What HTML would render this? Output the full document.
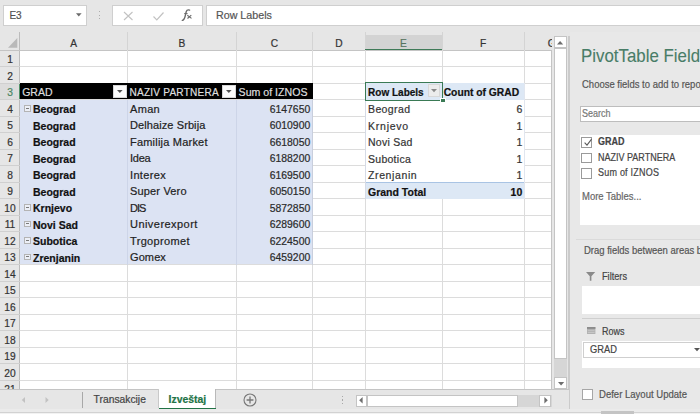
<!DOCTYPE html>
<html><head><meta charset="utf-8"><style>
html,body{margin:0;padding:0;width:700px;height:414px;overflow:hidden;background:#e6e6e6}
body{position:relative;font-family:"Liberation Sans", sans-serif}
#w{position:absolute;left:0;top:0;width:700px;height:414px;overflow:hidden}
#w>div{position:absolute}
.t{white-space:nowrap;-webkit-text-stroke-width:0.2px}
.r{text-align:right}
.c{text-align:center}
</style></head><body><div id="w">
<div style="left:0px;top:0px;width:700px;height:32px;background:#e6e6e6"></div>
<div style="left:3px;top:4.6px;width:84.4px;height:21.1px;background:#fff;border:1px solid #cfcfcf;box-sizing:border-box"></div>
<div class="t" style="left:9.4px;top:10.9px;font-size:10px;line-height:10px;color:#505050;">E3</div>
<svg style="position:absolute;left:76px;top:12.8px" width="6" height="4"><path d="M0 0.3 L5.6 0.3 L2.8 3.4Z" fill="#6a6a6a"/></svg>
<div style="left:99.1px;top:10.9px;width:1.4px;height:1.4px;background:#9a9a9a;border-radius:1px"></div>
<div style="left:99.1px;top:14.5px;width:1.4px;height:1.4px;background:#9a9a9a;border-radius:1px"></div>
<div style="left:99.1px;top:18px;width:1.4px;height:1.4px;background:#9a9a9a;border-radius:1px"></div>
<div style="left:112.3px;top:4.6px;width:91px;height:21.1px;background:#fff;border:1px solid #cfcfcf;box-sizing:border-box"></div>
<svg style="position:absolute;left:123px;top:11px" width="11" height="10"><path d="M1 1 L9.5 9 M9.5 1 L1 9" stroke="#c2c2c2" stroke-width="1.1" fill="none"/></svg>
<svg style="position:absolute;left:152px;top:10.5px" width="13" height="10"><path d="M1.5 5.5 L4.8 8.8 L11.5 1.5" stroke="#c2c2c2" stroke-width="1.2" fill="none"/></svg>
<svg style="position:absolute;left:180px;top:8px" width="14" height="14"><path d="M2.3 12.4 C3.8 12.2 4.6 10.5 5.2 8 L6.2 3.8 C6.7 2.2 7.8 1.6 9.6 2.1" stroke="#6a6a6a" stroke-width="1.35" fill="none" stroke-linecap="round"/><path d="M4.2 5.6 H7.6" stroke="#6a6a6a" stroke-width="1"/><path d="M7.3 7.2 L11.5 10.4 M11.3 7.1 L7.5 10.5" stroke="#6a6a6a" stroke-width="1.1"/></svg>
<div style="left:205.7px;top:4.6px;width:494.3px;height:21.1px;background:#fff;border:1px solid #cfcfcf;border-right:none;box-sizing:border-box"></div>
<div class="t" style="left:216px;top:10.3px;font-size:10.7px;line-height:10.7px;color:#555;">Row Labels</div>
<div style="left:0px;top:32px;width:551.4px;height:18.3px;background:#e6e6e6"></div>
<div style="left:365px;top:35px;width:77px;height:15px;background:#d3d3d3"></div>
<div class="t c" style="left:-26.35px;width:200px;top:39.03px;font-size:10.2px;line-height:10.2px;color:#333;">A</div>
<div style="left:127px;top:32px;width:1px;height:18px;background:#d4d4d4"></div>
<div class="t c" style="left:81.95px;width:200px;top:39.03px;font-size:10.2px;line-height:10.2px;color:#333;">B</div>
<div style="left:235.9px;top:32px;width:1px;height:18px;background:#d4d4d4"></div>
<div class="t c" style="left:174.55px;width:200px;top:39.03px;font-size:10.2px;line-height:10.2px;color:#333;">C</div>
<div style="left:312.2px;top:32px;width:1px;height:18px;background:#d4d4d4"></div>
<div class="t c" style="left:238.85px;width:200px;top:39.03px;font-size:10.2px;line-height:10.2px;color:#333;">D</div>
<div style="left:364.5px;top:32px;width:1px;height:18px;background:#d4d4d4"></div>
<div class="t c" style="left:303.5px;width:200px;top:39.03px;font-size:10.2px;line-height:10.2px;color:#56735f;">E</div>
<div style="left:441.5px;top:32px;width:1px;height:18px;background:#d4d4d4"></div>
<div class="t c" style="left:383.15px;width:200px;top:39.03px;font-size:10.2px;line-height:10.2px;color:#333;">F</div>
<div style="left:523.8px;top:32px;width:1px;height:18px;background:#d4d4d4"></div>
<div class="t c" style="left:451.7px;width:200px;top:39.03px;font-size:10.2px;line-height:10.2px;color:#333;">G</div>
<div style="left:0px;top:49.6px;width:551.4px;height:1px;background:#bcbcbc"></div>
<svg style="position:absolute;left:8px;top:37.8px" width="10" height="10"><path d="M9.3 0 L9.3 9.8 L0 9.8Z" fill="#b9b9b9"/></svg>
<div style="left:19.8px;top:50.3px;width:531.6px;height:339px;background:#fff"></div>
<div style="left:0px;top:50.3px;width:19.8px;height:339px;background:#e6e6e6"></div>
<div style="left:0px;top:83.3px;width:19.8px;height:16.5px;background:#dcdcdc"></div>
<div style="left:19.3px;top:32px;width:1px;height:357.3px;background:#bcbcbc"></div>
<div style="left:0px;top:49.7px;width:551.4px;height:1px;background:#c4c4c4"></div>
<div style="left:365px;top:48.7px;width:77px;height:1.8px;background:#3f7a58"></div>
<div style="left:18.6px;top:83.3px;width:1.3px;height:16.5px;background:#4f8f66"></div>
<div class="t c" style="left:-90px;width:200px;top:55.02px;font-size:10.2px;line-height:10.2px;color:#333;">1</div>
<div style="left:0px;top:66.3px;width:19.8px;height:1px;background:#d0d0d0"></div>
<div class="t c" style="left:-90px;width:200px;top:71.53px;font-size:10.2px;line-height:10.2px;color:#333;">2</div>
<div style="left:0px;top:82.8px;width:19.8px;height:1px;background:#d0d0d0"></div>
<div class="t c" style="left:-90px;width:200px;top:88.03px;font-size:10.2px;line-height:10.2px;color:#4a8562;">3</div>
<div style="left:0px;top:99.3px;width:19.8px;height:1px;background:#d0d0d0"></div>
<div class="t c" style="left:-90px;width:200px;top:104.54px;font-size:10.2px;line-height:10.2px;color:#333;">4</div>
<div style="left:0px;top:115.81px;width:19.8px;height:1px;background:#d0d0d0"></div>
<div class="t c" style="left:-90px;width:200px;top:121.04px;font-size:10.2px;line-height:10.2px;color:#333;">5</div>
<div style="left:0px;top:132.31px;width:19.8px;height:1px;background:#d0d0d0"></div>
<div class="t c" style="left:-90px;width:200px;top:137.55px;font-size:10.2px;line-height:10.2px;color:#333;">6</div>
<div style="left:0px;top:148.82px;width:19.8px;height:1px;background:#d0d0d0"></div>
<div class="t c" style="left:-90px;width:200px;top:154.05px;font-size:10.2px;line-height:10.2px;color:#333;">7</div>
<div style="left:0px;top:165.32px;width:19.8px;height:1px;background:#d0d0d0"></div>
<div class="t c" style="left:-90px;width:200px;top:170.56px;font-size:10.2px;line-height:10.2px;color:#333;">8</div>
<div style="left:0px;top:181.83px;width:19.8px;height:1px;background:#d0d0d0"></div>
<div class="t c" style="left:-90px;width:200px;top:187.06px;font-size:10.2px;line-height:10.2px;color:#333;">9</div>
<div style="left:0px;top:198.33px;width:19.8px;height:1px;background:#d0d0d0"></div>
<div class="t c" style="left:-90px;width:200px;top:203.56px;font-size:10.2px;line-height:10.2px;color:#333;">10</div>
<div style="left:0px;top:214.84px;width:19.8px;height:1px;background:#d0d0d0"></div>
<div class="t c" style="left:-90px;width:200px;top:220.07px;font-size:10.2px;line-height:10.2px;color:#333;">11</div>
<div style="left:0px;top:231.34px;width:19.8px;height:1px;background:#d0d0d0"></div>
<div class="t c" style="left:-90px;width:200px;top:236.57px;font-size:10.2px;line-height:10.2px;color:#333;">12</div>
<div style="left:0px;top:247.85px;width:19.8px;height:1px;background:#d0d0d0"></div>
<div class="t c" style="left:-90px;width:200px;top:253.08px;font-size:10.2px;line-height:10.2px;color:#333;">13</div>
<div style="left:0px;top:264.36px;width:19.8px;height:1px;background:#d0d0d0"></div>
<div class="t c" style="left:-90px;width:200px;top:269.58px;font-size:10.2px;line-height:10.2px;color:#333;">14</div>
<div style="left:0px;top:280.86px;width:19.8px;height:1px;background:#d0d0d0"></div>
<div class="t c" style="left:-90px;width:200px;top:286.09px;font-size:10.2px;line-height:10.2px;color:#333;">15</div>
<div style="left:0px;top:297.37px;width:19.8px;height:1px;background:#d0d0d0"></div>
<div class="t c" style="left:-90px;width:200px;top:302.59px;font-size:10.2px;line-height:10.2px;color:#333;">16</div>
<div style="left:0px;top:313.87px;width:19.8px;height:1px;background:#d0d0d0"></div>
<div class="t c" style="left:-90px;width:200px;top:319.1px;font-size:10.2px;line-height:10.2px;color:#333;">17</div>
<div style="left:0px;top:330.38px;width:19.8px;height:1px;background:#d0d0d0"></div>
<div class="t c" style="left:-90px;width:200px;top:335.6px;font-size:10.2px;line-height:10.2px;color:#333;">18</div>
<div style="left:0px;top:346.88px;width:19.8px;height:1px;background:#d0d0d0"></div>
<div class="t c" style="left:-90px;width:200px;top:352.11px;font-size:10.2px;line-height:10.2px;color:#333;">19</div>
<div style="left:0px;top:363.38px;width:19.8px;height:1px;background:#d0d0d0"></div>
<div class="t c" style="left:-90px;width:200px;top:368.61px;font-size:10.2px;line-height:10.2px;color:#333;">20</div>
<div style="left:0px;top:379.89px;width:19.8px;height:1px;background:#d0d0d0"></div>
<div class="t c" style="left:-90px;width:200px;top:385.12px;font-size:10.2px;line-height:10.2px;color:#333;">21</div>
<div style="left:0px;top:396.39px;width:19.8px;height:1px;background:#d0d0d0"></div>
<div style="left:19.8px;top:99.81px;width:292.9px;height:165.05px;background:#dce3f3"></div>
<div style="left:19.8px;top:66.3px;width:531.6px;height:1px;background:#dcdcdc"></div>
<div style="left:19.8px;top:82.8px;width:531.6px;height:1px;background:#dcdcdc"></div>
<div style="left:19.8px;top:99.3px;width:531.6px;height:1px;background:#dcdcdc"></div>
<div style="left:19.8px;top:115.81px;width:531.6px;height:1px;background:#dcdcdc"></div>
<div style="left:19.8px;top:132.31px;width:531.6px;height:1px;background:#dcdcdc"></div>
<div style="left:19.8px;top:148.82px;width:531.6px;height:1px;background:#dcdcdc"></div>
<div style="left:19.8px;top:165.32px;width:531.6px;height:1px;background:#dcdcdc"></div>
<div style="left:19.8px;top:181.83px;width:531.6px;height:1px;background:#dcdcdc"></div>
<div style="left:19.8px;top:198.33px;width:531.6px;height:1px;background:#dcdcdc"></div>
<div style="left:19.8px;top:214.84px;width:531.6px;height:1px;background:#dcdcdc"></div>
<div style="left:19.8px;top:231.34px;width:531.6px;height:1px;background:#dcdcdc"></div>
<div style="left:19.8px;top:247.85px;width:531.6px;height:1px;background:#dcdcdc"></div>
<div style="left:19.8px;top:264.36px;width:531.6px;height:1px;background:#dcdcdc"></div>
<div style="left:19.8px;top:280.86px;width:531.6px;height:1px;background:#dcdcdc"></div>
<div style="left:19.8px;top:297.37px;width:531.6px;height:1px;background:#dcdcdc"></div>
<div style="left:19.8px;top:313.87px;width:531.6px;height:1px;background:#dcdcdc"></div>
<div style="left:19.8px;top:330.38px;width:531.6px;height:1px;background:#dcdcdc"></div>
<div style="left:19.8px;top:346.88px;width:531.6px;height:1px;background:#dcdcdc"></div>
<div style="left:19.8px;top:363.38px;width:531.6px;height:1px;background:#dcdcdc"></div>
<div style="left:19.8px;top:379.89px;width:531.6px;height:1px;background:#dcdcdc"></div>
<div style="left:19.8px;top:396.39px;width:531.6px;height:1px;background:#dcdcdc"></div>
<div style="left:127px;top:50.3px;width:1px;height:339px;background:#dcdcdc"></div>
<div style="left:235.9px;top:50.3px;width:1px;height:339px;background:#dcdcdc"></div>
<div style="left:312.2px;top:50.3px;width:1px;height:339px;background:#dcdcdc"></div>
<div style="left:364.5px;top:50.3px;width:1px;height:339px;background:#dcdcdc"></div>
<div style="left:441.5px;top:50.3px;width:1px;height:339px;background:#dcdcdc"></div>
<div style="left:523.8px;top:50.3px;width:1px;height:339px;background:#dcdcdc"></div>
<div style="left:19.8px;top:99.81px;width:292.9px;height:164.55px;background:#dce3f3"></div>
<div style="left:127px;top:99.81px;width:1px;height:165.05px;background:#cdd5e8"></div>
<div style="left:235.9px;top:99.81px;width:1px;height:165.05px;background:#cdd5e8"></div>
<div style="left:312.2px;top:83.3px;width:1px;height:181.55px;background:#c9cfdd"></div>
<div style="left:19.8px;top:83.3px;width:292.9px;height:15.9px;background:#000"></div>
<div class="t" style="left:22.2px;top:87.38px;font-size:10.5px;line-height:10.5px;color:#dedede;">GRAD</div>
<div class="t" style="left:129.5px;top:87.72px;font-size:10.1px;line-height:10.1px;color:#dedede;letter-spacing:0.2px">NAZIV PARTNERA</div>
<div class="t" style="left:238.6px;top:87.29px;font-size:10.6px;line-height:10.6px;color:#dedede;">Sum of IZNOS</div>
<div style="left:113.2px;top:84.9px;width:13.8px;height:13.2px;background:#fbfbfb;border:1px solid #d6d6d6;box-sizing:border-box"></div>
<svg style="position:absolute;left:117.2px;top:90.2px" width="7" height="5"><path d="M0 0 L5.6 0 L2.8 3Z" fill="#505050"/></svg>
<div style="left:222.1px;top:84.9px;width:13.8px;height:13.2px;background:#fbfbfb;border:1px solid #d6d6d6;box-sizing:border-box"></div>
<svg style="position:absolute;left:226.1px;top:90.2px" width="7" height="5"><path d="M0 0 L5.6 0 L2.8 3Z" fill="#505050"/></svg>
<div class="t" style="left:33px;top:104.18px;font-size:10.5px;line-height:10.5px;color:#111;font-weight:bold;">Beograd</div>
<div class="t" style="left:130px;top:103.76px;font-size:11px;line-height:11px;color:#222;letter-spacing:0.333px">Aman</div>
<div class="t r" style="left:110.2px;width:200px;top:104.56px;font-size:10.4px;line-height:10.4px;color:#2a2a2a;">6147650</div>
<div style="left:24.2px;top:105.01px;width:6.6px;height:6.6px;border:1px solid #b4b4b4;box-sizing:border-box;background:#eceff7"></div>
<div style="left:25.7px;top:107.91px;width:3.6px;height:0.9px;background:#7a7a7a"></div>
<div class="t" style="left:33px;top:120.69px;font-size:10.5px;line-height:10.5px;color:#111;font-weight:bold;">Beograd</div>
<div class="t" style="left:130px;top:120.26px;font-size:11px;line-height:11px;color:#222;letter-spacing:0.093px">Delhaize Srbija</div>
<div class="t r" style="left:110.2px;width:200px;top:121.07px;font-size:10.4px;line-height:10.4px;color:#2a2a2a;">6010900</div>
<div class="t" style="left:33px;top:137.19px;font-size:10.5px;line-height:10.5px;color:#111;font-weight:bold;">Beograd</div>
<div class="t" style="left:130px;top:136.77px;font-size:11px;line-height:11px;color:#222;letter-spacing:0.207px">Familija Market</div>
<div class="t r" style="left:110.2px;width:200px;top:137.58px;font-size:10.4px;line-height:10.4px;color:#2a2a2a;">6618050</div>
<div class="t" style="left:33px;top:153.69px;font-size:10.5px;line-height:10.5px;color:#111;font-weight:bold;">Beograd</div>
<div class="t" style="left:130px;top:153.27px;font-size:11px;line-height:11px;color:#222;letter-spacing:-0.233px">Idea</div>
<div class="t r" style="left:110.2px;width:200px;top:154.08px;font-size:10.4px;line-height:10.4px;color:#2a2a2a;">6188200</div>
<div class="t" style="left:33px;top:170.2px;font-size:10.5px;line-height:10.5px;color:#111;font-weight:bold;">Beograd</div>
<div class="t" style="left:130px;top:169.78px;font-size:11px;line-height:11px;color:#222;letter-spacing:0.333px">Interex</div>
<div class="t r" style="left:110.2px;width:200px;top:170.59px;font-size:10.4px;line-height:10.4px;color:#2a2a2a;">6169500</div>
<div class="t" style="left:33px;top:186.7px;font-size:10.5px;line-height:10.5px;color:#111;font-weight:bold;">Beograd</div>
<div class="t" style="left:130px;top:186.28px;font-size:11px;line-height:11px;color:#222;letter-spacing:0.167px">Super Vero</div>
<div class="t r" style="left:110.2px;width:200px;top:187.09px;font-size:10.4px;line-height:10.4px;color:#2a2a2a;">6050150</div>
<div class="t" style="left:33px;top:203.21px;font-size:10.5px;line-height:10.5px;color:#111;font-weight:bold;">Krnjevo</div>
<div class="t" style="left:130px;top:202.78px;font-size:11px;line-height:11px;color:#222;letter-spacing:-1.0px">DIS</div>
<div class="t r" style="left:110.2px;width:200px;top:203.59px;font-size:10.4px;line-height:10.4px;color:#2a2a2a;">5872850</div>
<div style="left:24.2px;top:204.03px;width:6.6px;height:6.6px;border:1px solid #b4b4b4;box-sizing:border-box;background:#eceff7"></div>
<div style="left:25.7px;top:206.93px;width:3.6px;height:0.9px;background:#7a7a7a"></div>
<div class="t" style="left:33px;top:219.71px;font-size:10.5px;line-height:10.5px;color:#111;font-weight:bold;">Novi Sad</div>
<div class="t" style="left:130px;top:219.29px;font-size:11px;line-height:11px;color:#222;letter-spacing:0.455px">Univerexport</div>
<div class="t r" style="left:110.2px;width:200px;top:220.1px;font-size:10.4px;line-height:10.4px;color:#2a2a2a;">6289600</div>
<div style="left:24.2px;top:220.54px;width:6.6px;height:6.6px;border:1px solid #b4b4b4;box-sizing:border-box;background:#eceff7"></div>
<div style="left:25.7px;top:223.44px;width:3.6px;height:0.9px;background:#7a7a7a"></div>
<div class="t" style="left:33px;top:236.22px;font-size:10.5px;line-height:10.5px;color:#111;font-weight:bold;">Subotica</div>
<div class="t" style="left:130px;top:235.79px;font-size:11px;line-height:11px;color:#222;letter-spacing:0.333px">Trgopromet</div>
<div class="t r" style="left:110.2px;width:200px;top:236.6px;font-size:10.4px;line-height:10.4px;color:#2a2a2a;">6224500</div>
<div style="left:24.2px;top:237.04px;width:6.6px;height:6.6px;border:1px solid #b4b4b4;box-sizing:border-box;background:#eceff7"></div>
<div style="left:25.7px;top:239.94px;width:3.6px;height:0.9px;background:#7a7a7a"></div>
<div class="t" style="left:33px;top:252.72px;font-size:10.5px;line-height:10.5px;color:#111;font-weight:bold;">Zrenjanin</div>
<div class="t" style="left:130px;top:252.3px;font-size:11px;line-height:11px;color:#222;letter-spacing:0.1px">Gomex</div>
<div class="t r" style="left:110.2px;width:200px;top:253.11px;font-size:10.4px;line-height:10.4px;color:#2a2a2a;">6459200</div>
<div style="left:24.2px;top:253.55px;width:6.6px;height:6.6px;border:1px solid #b4b4b4;box-sizing:border-box;background:#eceff7"></div>
<div style="left:25.7px;top:256.45px;width:3.6px;height:0.9px;background:#7a7a7a"></div>
<div style="left:365px;top:83.3px;width:159.3px;height:16.5px;background:#dde8f5"></div>
<div style="left:365px;top:99.81px;width:159.3px;height:82.52px;background:#fff"></div>
<div style="left:365px;top:181.73px;width:159.3px;height:1px;background:#a9c4e4"></div>
<div style="left:365px;top:182.73px;width:159.3px;height:16.11px;background:#dde8f5"></div>
<div style="left:364.5px;top:83.3px;width:1px;height:115.53px;background:#d6dbe6"></div>
<div style="left:523.8px;top:83.3px;width:1px;height:115.53px;background:#e1e6ef"></div>
<div class="t" style="left:368.1px;top:87.8px;font-size:10px;line-height:10px;color:#111;font-weight:bold;">Row Labels</div>
<div style="left:427.9px;top:84.3px;width:12.5px;height:13px;background:#ececec;border:1px solid #d8d8d8;box-sizing:border-box"></div>
<svg style="position:absolute;left:431.2px;top:89px" width="7" height="5"><path d="M0 0 L6 0 L3 3.2Z" fill="#8a8a8a"/></svg>
<div class="t r" style="left:319.2px;width:200px;top:87.55px;font-size:10.3px;line-height:10.3px;color:#111;font-weight:bold;">Count of GRAD</div>
<div class="t" style="left:368px;top:104.18px;font-size:10.5px;line-height:10.5px;color:#333;letter-spacing:0.383px">Beograd</div>
<div class="t r" style="left:322.3px;width:200px;top:104.18px;font-size:10.5px;line-height:10.5px;color:#333;">6</div>
<div class="t" style="left:368px;top:120.69px;font-size:10.5px;line-height:10.5px;color:#333;letter-spacing:0.767px">Krnjevo</div>
<div class="t r" style="left:322.3px;width:200px;top:120.69px;font-size:10.5px;line-height:10.5px;color:#333;">1</div>
<div class="t" style="left:368px;top:137.19px;font-size:10.5px;line-height:10.5px;color:#333;letter-spacing:0.243px">Novi Sad</div>
<div class="t r" style="left:322.3px;width:200px;top:137.19px;font-size:10.5px;line-height:10.5px;color:#333;">1</div>
<div class="t" style="left:368px;top:153.69px;font-size:10.5px;line-height:10.5px;color:#333;letter-spacing:0.271px">Subotica</div>
<div class="t r" style="left:322.3px;width:200px;top:153.69px;font-size:10.5px;line-height:10.5px;color:#333;">1</div>
<div class="t" style="left:368px;top:170.2px;font-size:10.5px;line-height:10.5px;color:#333;letter-spacing:0.612px">Zrenjanin</div>
<div class="t r" style="left:322.3px;width:200px;top:170.2px;font-size:10.5px;line-height:10.5px;color:#333;">1</div>
<div class="t" style="left:368px;top:186.7px;font-size:10.5px;line-height:10.5px;color:#111;font-weight:bold;">Grand Total</div>
<div class="t r" style="left:322.3px;width:200px;top:186.7px;font-size:10.5px;line-height:10.5px;color:#111;font-weight:bold;">10</div>
<div style="left:364.6px;top:82.4px;width:78px;height:18.4px;border:1.8px solid #3a7a55;box-sizing:border-box"></div>
<div style="left:440px;top:97.8px;width:3.6px;height:3.6px;background:#3a7a55;border:0.6px solid #fff"></div>
<div style="left:550.8px;top:50px;width:1px;height:339.3px;background:#c4c4c4"></div>
<div style="left:551.8px;top:32px;width:148.6px;height:357.3px;background:#e6e6e6"></div>
<div style="left:554px;top:36px;width:13px;height:353.3px;background:#e0e0e0"></div>
<div style="left:554px;top:36.1px;width:13px;height:12.4px;background:#fff;border:1px solid #c4c4c4;box-sizing:border-box"></div>
<svg style="position:absolute;left:557.4px;top:40.6px" width="7" height="4"><path d="M0 3.4 L6.2 3.4 L3.1 0Z" fill="#6e6e6e"/></svg>
<div style="left:554px;top:48.3px;width:13px;height:311px;background:#fff;border:1px solid #c4c4c4;box-sizing:border-box"></div>
<div style="left:554px;top:359.3px;width:13px;height:17.8px;background:#d6d6d6"></div>
<div style="left:554px;top:377.1px;width:13px;height:12.3px;background:#fff;border:1px solid #c4c4c4;box-sizing:border-box"></div>
<svg style="position:absolute;left:557.6px;top:381.7px" width="7" height="4"><path d="M0 0 L6.2 0 L3.1 3.4Z" fill="#6e6e6e"/></svg>
<div style="left:568.4px;top:36px;width:1.5px;height:373px;background:#cbcbcb"></div>
<div style="left:0px;top:389.3px;width:569px;height:22px;background:#e6e6e6"></div>
<div style="left:0px;top:388.7px;width:569px;height:1.1px;background:#c4c4c4"></div>
<svg style="position:absolute;left:21px;top:397px" width="5" height="7"><path d="M4 0 L4 6 L0.8 3Z" fill="#c2c2c2"/></svg>
<svg style="position:absolute;left:44.5px;top:397px" width="5" height="7"><path d="M0.5 0 L0.5 6 L3.7 3Z" fill="#c2c2c2"/></svg>
<div style="left:81.6px;top:392px;width:0.9px;height:16px;background:#a8a8a8"></div>
<div class="t" style="left:93.6px;top:395.14px;font-size:10.3px;line-height:10.3px;color:#444;">Transakcije</div>
<div style="left:158.6px;top:388.7px;width:57px;height:19.4px;background:#fff"></div>
<div style="left:158.6px;top:407.6px;width:57px;height:1.8px;background:#217346"></div>
<div style="left:158.2px;top:389.3px;width:0.9px;height:18.5px;background:#c9c9c9"></div>
<div style="left:215.4px;top:389.3px;width:0.9px;height:18.5px;background:#b9b9b9"></div>
<div class="t" style="left:168.6px;top:394.96px;font-size:10.4px;line-height:10.4px;color:#217346;font-weight:bold;">Izveštaj</div>
<svg style="position:absolute;left:243px;top:393px" width="14" height="14"><circle cx="7" cy="7" r="6" stroke="#777" stroke-width="1.1" fill="none"/><path d="M7 3.6 V10.4 M3.6 7 H10.4" stroke="#777" stroke-width="1.3"/></svg>
<div style="left:341.6px;top:395.9px;width:1.3px;height:1.3px;background:#a8a8a8"></div>
<div style="left:341.6px;top:399.4px;width:1.3px;height:1.3px;background:#a8a8a8"></div>
<div style="left:341.6px;top:402.9px;width:1.3px;height:1.3px;background:#a8a8a8"></div>
<div style="left:355.5px;top:394.6px;width:196px;height:12.2px;background:#d6d6d6"></div>
<div style="left:355.5px;top:394.6px;width:11.8px;height:12.2px;background:#fff;border:1px solid #c4c4c4;box-sizing:border-box"></div>
<svg style="position:absolute;left:359px;top:397.4px" width="5" height="7"><path d="M3.6 0 L3.6 6.4 L0.2 3.2Z" fill="#6e6e6e"/></svg>
<div style="left:367px;top:394.6px;width:150.6px;height:12.2px;background:#fff;border:1px solid #c4c4c4;box-sizing:border-box"></div>
<div style="left:539.4px;top:394.6px;width:12px;height:12.2px;background:#fff;border:1px solid #c4c4c4;box-sizing:border-box"></div>
<svg style="position:absolute;left:543.6px;top:397.4px" width="5" height="7"><path d="M0.4 0 L0.4 6.4 L3.8 3.2Z" fill="#6e6e6e"/></svg>
<div style="left:569.8px;top:32px;width:130.2px;height:382px;background:#e8e8e8"></div>
<div class="t" style="left:581.4px;top:47.33px;font-size:18.2px;line-height:18.2px;color:#487d67;transform:scaleX(0.927);transform-origin:0 0;-webkit-text-stroke-width:0.1px">PivotTable Fields</div>
<div class="t" style="left:581.5px;top:79.26px;font-size:10.64px;line-height:10.64px;color:#555;transform:scaleX(0.8929);transform-origin:0 0;">Choose fields to add to report:</div>
<div style="left:580.2px;top:106.2px;width:125px;height:15.8px;background:#fff;border:1px solid #bdbdbd;box-sizing:border-box"></div>
<div class="t" style="left:581.6px;top:108.73px;font-size:10.08px;line-height:10.08px;color:#777;transform:scaleX(0.8929);transform-origin:0 0;">Search</div>
<div style="left:579.7px;top:135.3px;width:125px;height:90.1px;background:#fff"></div>
<div style="left:581.1px;top:137.2px;width:11.2px;height:10.7px;border:1.2px solid #9a9a9a;box-sizing:border-box;background:#fff"></div>
<svg style="position:absolute;left:582.5px;top:138.2px" width="10" height="9"><path d="M1.6 4.6 L4 7.2 L8.6 1.2" stroke="#5a5a5a" stroke-width="1.1" fill="none"/></svg>
<div class="t" style="left:597.9px;top:137.43px;font-size:10.08px;line-height:10.08px;color:#444;font-weight:bold;transform:scaleX(0.8929);transform-origin:0 0;">GRAD</div>
<div style="left:581.1px;top:152.7px;width:11.2px;height:10.7px;border:1.2px solid #9a9a9a;box-sizing:border-box;background:#fff"></div>
<div class="t" style="left:597.9px;top:152.93px;font-size:10.08px;line-height:10.08px;color:#444;transform:scaleX(0.8929);transform-origin:0 0;">NAZIV PARTNERA</div>
<div style="left:581.1px;top:168.2px;width:11.2px;height:10.7px;border:1.2px solid #9a9a9a;box-sizing:border-box;background:#fff"></div>
<div class="t" style="left:597.9px;top:168.43px;font-size:10.08px;line-height:10.08px;color:#444;transform:scaleX(0.8929);transform-origin:0 0;letter-spacing:0.25px">Sum of IZNOS</div>
<div class="t" style="left:582px;top:190.96px;font-size:10.64px;line-height:10.64px;color:#666;transform:scaleX(0.8929);transform-origin:0 0;">More Tables...</div>
<div style="left:576px;top:238.6px;width:124px;height:1px;background:#dadada"></div>
<div class="t" style="left:584px;top:244.76px;font-size:10.64px;line-height:10.64px;color:#555;transform:scaleX(0.8929);transform-origin:0 0;">Drag fields between areas below:</div>
<svg style="position:absolute;left:585.8px;top:271.6px" width="10" height="10"><path d="M0 0 H9.2 L5.4 4.3 V8.7 H3.8 V4.3Z" fill="#8a8a8a"/></svg>
<div class="t" style="left:601.6px;top:271.85px;font-size:10.3px;line-height:10.3px;color:#444;transform:scaleX(0.8929);transform-origin:0 0;">Filters</div>
<div style="left:582px;top:286px;width:120px;height:28px;background:#fff"></div>
<div style="left:582px;top:318.2px;width:118px;height:1px;background:#cfcfcf"></div>
<svg style="position:absolute;left:586.6px;top:326.8px" width="9" height="8"><rect x="0" y="0" width="8.4" height="7" fill="#b2b2b2"/><rect x="0" y="0" width="8.4" height="1.9" fill="#8c8c8c"/><path d="M0.8 3.7 H7.6 M0.8 5.5 H7.6" stroke="#d0d0d0" stroke-width="0.7"/></svg>
<div class="t" style="left:602px;top:326.73px;font-size:10.08px;line-height:10.08px;color:#444;transform:scaleX(0.8929);transform-origin:0 0;">Rows</div>
<div style="left:582px;top:341.3px;width:120px;height:27.1px;background:#fff"></div>
<div style="left:583.4px;top:342.4px;width:120px;height:15.6px;background:#fff;border:1px solid #cfcfcf;box-sizing:border-box"></div>
<div class="t" style="left:589.5px;top:345.14px;font-size:10.42px;line-height:10.42px;color:#444;transform:scaleX(0.8929);transform-origin:0 0;">GRAD</div>
<svg style="position:absolute;left:694px;top:348px" width="7" height="4"><path d="M0 0 L6 0 L3 3.2Z" fill="#555"/></svg>
<div style="left:582.3px;top:389.4px;width:10.7px;height:10.3px;border:1.2px solid #a6a6a6;box-sizing:border-box;background:#fff"></div>
<div class="t" style="left:598.8px;top:389.11px;font-size:10.7px;line-height:10.7px;color:#555;transform:scaleX(0.8929);transform-origin:0 0;">Defer Layout Update</div>
<div style="left:0px;top:409.2px;width:700px;height:2.8px;background:#ebebeb"></div>
<div style="left:0px;top:411.6px;width:700px;height:0.9px;background:#d2d2d2"></div>
<div style="left:0px;top:412.5px;width:700px;height:1.5px;background:#f2f2f2"></div>
<div style="left:601px;top:411.3px;width:33px;height:2.7px;background:#c4c4c4"></div>
</div></body></html>
